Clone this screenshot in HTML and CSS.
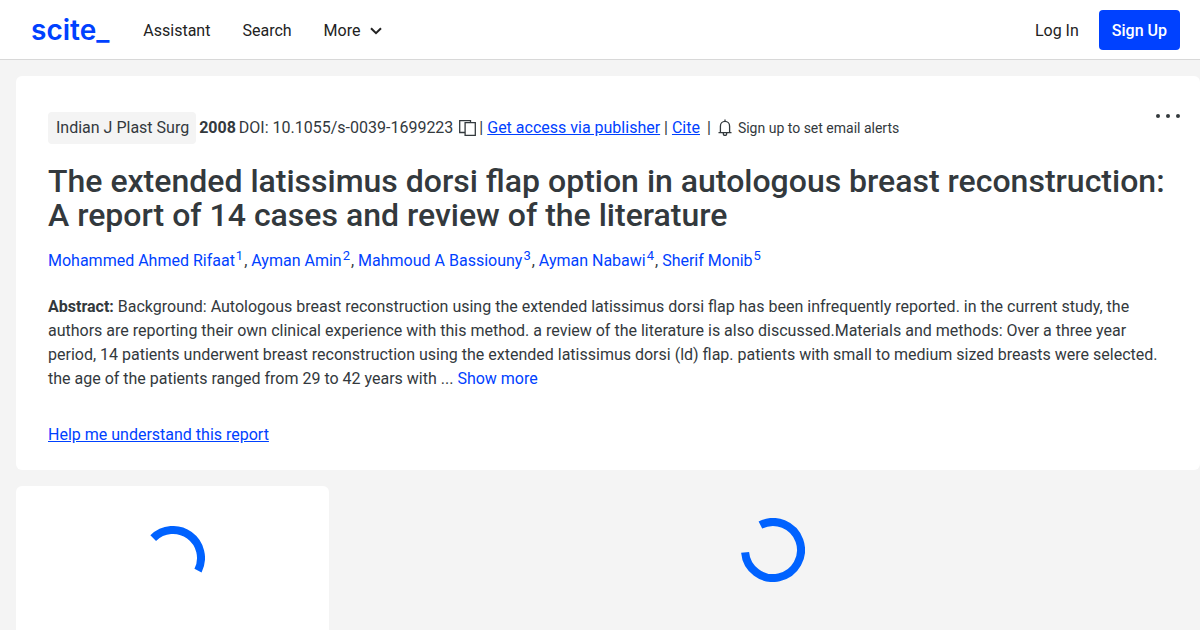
FILE: index.html
```html
<!DOCTYPE html>
<html lang="en">
<head>
  <meta charset="UTF-8" />
  <meta name="viewport" content="width=device-width, initial-scale=1.0"/>
  <title>The extended latissimus dorsi flap option in autologous breast reconstruction | scite</title>
  <link rel="stylesheet" href="styles.css">
</head>
<body>
  <header class="header">
    <a class="logo" href="#">scite_</a>
    <nav class="nav">
      <a href="#">Assistant</a>
      <a href="#">Search</a>
      <button class="more" type="button">More
        <svg width="12" height="8" viewBox="0 0 12 8" fill="none" stroke="currentColor" stroke-width="2"><path d="M1 1.2 6 6.2 11 1.2"/></svg>
      </button>
    </nav>
    <div class="account">
      <a href="#">Log In</a>
      <button class="sign-up" type="button">Sign Up</button>
    </div>
  </header>

  <main class="main">
    <article class="card paper">
      <div class="meta">
        <span class="journal">Indian J Plast Surg</span>
        <strong>2008</strong>
        <span>DOI: 10.1055/s-0039-1699223</span>
        <button class="copy" type="button" aria-label="Copy DOI">
          <svg width="17" height="18" viewBox="0 0 17 18" fill="none" stroke="currentColor" stroke-width="1.3"><path d="M5.5 13.5H.7V1.6H11.5V3.5M6.1 3.6H16.3V16.4H6.1Z"/></svg>
        </button>
        <span class="links">| <a href="#">Get access via publisher</a> | <a href="#">Cite</a></span>
        <span class="divider">|</span>
        <button class="alerts" type="button">
          <svg width="14" height="18" viewBox="0 0 14 18" fill="none" stroke="currentColor" stroke-width="1.3"><path d="M.5 13.6H13.5M2.4 13.4V7.2A4.6 4.8 0 0 1 11.6 7.2V13.4M7 2.6V.4M5.3 14.2A1.7 2.2 0 0 0 8.7 14.2"/></svg>
          Sign up to set email alerts
        </button>
        <button class="menu" type="button" aria-label="More options">
          <svg width="24" height="4" viewBox="0 0 24 4" fill="currentColor"><circle cx="2" cy="2" r="2"/><circle cx="12" cy="2" r="2"/><circle cx="22" cy="2" r="2"/></svg>
        </button>
      </div>

      <h1>The extended latissimus dorsi flap option in autologous breast reconstruction: A report of 14 cases and review of the literature</h1>

      <p class="authors"><a href="#">Mohammed Ahmed Rifaat<sup>1</sup></a>, <a href="#">Ayman Amin<sup>2</sup></a>, <a href="#">Mahmoud A Bassiouny<sup>3</sup></a>, <a href="#">Ayman Nabawi<sup>4</sup></a>, <a href="#">Sherif Monib<sup>5</sup></a></p>

      <p class="abstract"><strong>Abstract:</strong> Background: Autologous breast reconstruction using the extended latissimus dorsi flap has been infrequently reported. in the current study, the authors are reporting their own clinical experience with this method. a review of the literature is also discussed.Materials and methods: Over a three year period, 14 patients underwent breast reconstruction using the extended latissimus dorsi (ld) flap. patients with small to medium sized breasts were selected. the age of the patients ranged from 29 to 42 years with ... <button class="show-more" type="button">Show more</button></p>

      <a class="help" href="#">Help me understand this report</a>
    </article>

    <div class="columns">
      <aside class="card filters">
        <svg class="spinner" width="64" height="64" viewBox="0 0 64 64"><path d="M12.2 12.2A28 28 0 0 1 57 44.6"/></svg>
      </aside>
      <section class="results">
        <svg class="spinner" width="64" height="64" viewBox="0 0 64 64"><path d="M19.4 7A28 28 0 1 1 4.1 34.4"/></svg>
      </section>
    </div>
  </main>
</body>
</html>
```
FILE: styles.css
```css
* {
  box-sizing: border-box;
}

body {
  margin: 0;
  background-color: #f4f4f4;
  color: #33393d;
  font-family: Roboto, "Liberation Sans", sans-serif;
  font-size: 16px;
  line-height: 24px;
}

a {
  color: #0041ff;
}

button {
  padding: 0;
  border: 0;
  background: none;
  color: inherit;
  font: inherit;
  cursor: pointer;
}

svg {
  flex: none;
}

.header {
  display: flex;
  align-items: center;
  height: 60px;
  padding: 0 20px 0 31px;
  border-bottom: 1px solid #d8d8d8;
  background-color: #fff;
  color: #222;
}

.header a {
  color: inherit;
  text-decoration: none;
}

.header .logo {
  color: #0041ff;
  font-family: Inter, sans-serif;
  font-size: 28px;
  font-weight: 600;
}

.nav {
  display: flex;
  gap: 32px;
  margin-left: 34px;
  padding-top: 2px;
}

.more {
  display: flex;
  align-items: center;
  gap: 10px;
}

.account {
  display: flex;
  align-items: center;
  gap: 20px;
  margin-left: auto;
}

.account a {
  padding-top: 2px;
}

.sign-up {
  height: 40px;
  padding: 2px 13px 0;
  border-radius: 4px;
  background-color: #0041ff;
  color: #fff;
  font-weight: 500;
}

.main {
  padding: 16px 0 0 16px;
}

.card {
  border-radius: 6px;
  background-color: #fff;
}

.paper {
  padding: 36px 20px 23px 32px;
}

.meta {
  display: flex;
  align-items: center;
  gap: 3px;
}

.journal {
  padding: 4px 7px 4px 8px;
  border-radius: 4px;
  background-color: #f4f4f4;
}

.copy {
  display: flex;
  margin-left: 3px;
}

.divider {
  margin-left: 4px;
}

.alerts {
  display: flex;
  align-items: center;
  gap: 6px;
  margin-left: 4px;
  font-size: 14px;
}

.menu {
  display: flex;
  align-self: flex-start;
  margin: 2px 0 0 auto;
}

h1 {
  margin: 20px 0 17px;
  font-size: 32px;
  font-weight: 500;
  line-height: 34px;
}

.authors {
  margin: 0 0 22px;
}

.authors a {
  text-decoration: none;
}

sup {
  margin: 0 1px;
  font-size: 13px;
  line-height: 0;
}

.abstract {
  margin: 0 0 32px;
  padding-right: 12px;
}

.show-more {
  color: #0041ff;
}

.help {
  display: inline-block;
}

.columns {
  display: grid;
  grid-template-columns: 313px 1fr;
  gap: 16px;
  margin-top: 16px;
}

.filters {
  display: flex;
  justify-content: center;
  padding: 40px 0 80px;
}

.results {
  display: flex;
  justify-content: center;
  padding: 32px 0;
}

.spinner {
  fill: none;
  stroke: #0062ff;
  stroke-width: 8;
}
```
